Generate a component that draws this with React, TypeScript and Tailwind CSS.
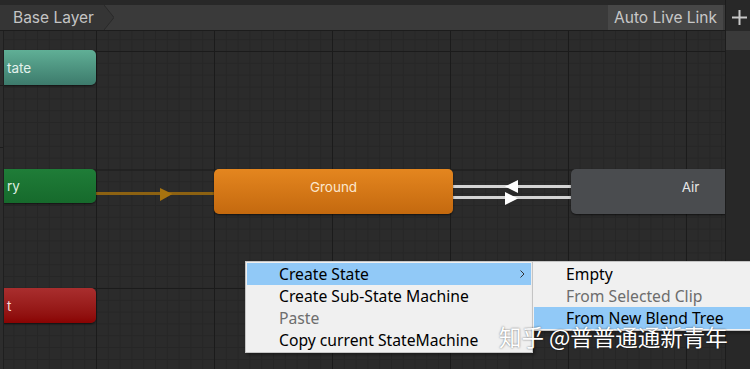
import React from "react";

const gridBg =
  "bg-[#2b2b2b] bg-[linear-gradient(to_right,#1b1b1b_1px,transparent_1px),linear-gradient(to_bottom,#1b1b1b_1px,transparent_1px),linear-gradient(to_right,#262626_1px,transparent_1px),linear-gradient(to_bottom,#262626_1px,transparent_1px)] bg-[size:118px_118.5px,118px_118.5px,11.8px_11.85px,11.8px_11.85px] bg-[position:92px_20px,92px_20px,92px_20px,92px_20px]";

function MenuItem({
  label,
  highlighted,
  disabled,
  arrow,
  pl,
}: {
  label: string;
  highlighted?: boolean;
  disabled?: boolean;
  arrow?: boolean;
  pl: string;
}) {
  return (
    <div
      className={`relative flex h-[22px] items-center pt-[2px] ${pl} ${
        highlighted ? "bg-[#91c9f7]" : ""
      } ${disabled ? "text-[#6d6d6d]" : "text-[#000]"}`}
    >
      <span>{label}</span>
      {arrow && (
        <svg
          className="absolute right-[6px] top-[7px]"
          width="5"
          height="8"
          viewBox="0 0 5 8"
        >
          <path d="M0.5 0.5 L4 4 L0.5 7.5" stroke="#333" strokeWidth="1" fill="none" />
        </svg>
      )}
    </div>
  );
}

export default function App() {
  return (
    <div className="relative flex h-[369px] w-[750px] overflow-hidden bg-[#282828] font-['Inter',sans-serif]">
      {/* left main column */}
      <div className="flex w-[725px] flex-col">
        {/* top toolbar */}
        <div className="h-[5px] bg-[#282828]" />
        <div className="flex h-[26px] items-stretch border-b border-[#1c1c1c] bg-[#3a3a3a]">
          <div className="flex items-center">
            <div className="flex h-full items-center bg-[#353535] pl-[13px] pr-[10px] text-[15.5px] text-[#c4c4c4]">
              Base Layer
            </div>
            <svg width="10" height="25" viewBox="0 0 10 25" className="block">
              <path d="M0 0 L10 12.5 L0 25 Z" fill="#353535" />
              <path d="M0 0 L10 12.5 L0 25" stroke="#2a2a2a" strokeWidth="1" fill="none" />
            </svg>
          </div>
          <div className="flex-1" />
          <div className="mr-[2px] flex items-center bg-[#474747] px-[6px] text-[15.5px] text-[#c8c8c8]">
            Auto Live Link
          </div>
        </div>
        {/* body */}
        <div className="flex flex-1">
          <div className="relative w-[4px] border-r border-[#1f1f1f] bg-[#2d2d2d]">
            <div className="absolute left-0 top-[54px] h-px w-full bg-[#1c1c1c]" />
            <div className="absolute left-0 top-[116px] h-px w-full bg-[#1c1c1c]" />
          </div>
          <div className={`relative flex-1 overflow-hidden ${gridBg}`}>
            {/* connectors */}
            <svg className="absolute left-0 top-0" width="721" height="338">
              <rect x="92" y="161" width="118" height="3" fill="#8d6212" />
              <path d="M156 157 L168.5 163 L156 170 Z" fill="#a7730f" />
              <rect x="449" y="154" width="120" height="3" fill="#d4d4d4" />
              <rect x="449" y="165" width="120" height="3" fill="#d4d4d4" />
              <path d="M514 149 L501 155.5 L514 162 Z" fill="#ffffff" />
              <path d="M501 161 L514 167.5 L501 174 Z" fill="#ffffff" />
            </svg>
            {/* any state (cut) */}
            <div className="absolute left-[-4px] top-[19px] flex h-[35px] w-[96px] items-center rounded-[5px] bg-gradient-to-b from-[#60af96] to-[#3d7b6c] pl-[7px] pt-px text-[13.5px] text-[#e4f1ec] shadow-[0_1px_2px_rgba(0,0,0,0.6)]">
              tate
            </div>
            {/* entry (cut) */}
            <div className="absolute left-[-4px] top-[138px] flex h-[34px] w-[96px] items-center rounded-[5px] bg-gradient-to-b from-[#1f7d38] to-[#166a2c] pl-[7px] pt-px text-[13.5px] text-[#dfeee1] shadow-[0_1px_2px_rgba(0,0,0,0.6)]">
              ry
            </div>
            {/* exit (cut) */}
            <div className="absolute left-[-4px] top-[257px] flex h-[35px] w-[96px] items-center rounded-[5px] bg-gradient-to-b from-[#a92e2e] to-[#8a0303] pl-[7px] pt-px text-[13.5px] text-[#f3dcdc] shadow-[0_1px_2px_rgba(0,0,0,0.6)]">
              t
            </div>
            {/* Ground */}
            <div className="absolute left-[210px] top-[138px] flex h-[45px] w-[239px] justify-center rounded-[5px] bg-gradient-to-b from-[#e4861f] to-[#c4690e] pt-[8px] text-[13.5px] text-[#fbe7cd] shadow-[0_1px_2px_rgba(0,0,0,0.6)]">
              Ground
            </div>
            {/* Air */}
            <div className="absolute left-[567px] top-[138px] flex h-[45px] w-[239px] justify-center rounded-[5px] bg-[#4a4c4f] pt-[8px] text-[13.5px] text-[#e6e6e6] shadow-[0_1px_2px_rgba(0,0,0,0.6)]">
              Air
            </div>
          </div>
        </div>
      </div>
      {/* right panel */}
      <div className="flex w-[25px] flex-col border-l border-[#1c1c1c] bg-[#282828]">
        <div className="flex h-[31px] items-center justify-center pl-[2px] pt-[3px]">
          <svg width="15" height="15" viewBox="0 0 15 15">
            <rect x="6.5" y="0" width="2" height="15" fill="#c8c8c8" />
            <rect x="0" y="6.5" width="15" height="2" fill="#c8c8c8" />
          </svg>
        </div>
        <div className="h-[19px] bg-[#3a3a3a]" />
        <div className="flex-1" />
      </div>

      {/* context menu */}
      <div className="absolute left-[245px] top-[261px] w-[288px] border border-[#c4c4c4] bg-[#f0f0f0] p-px font-['Noto_Sans','Liberation_Sans',sans-serif] text-[15.7px] leading-none shadow-[2px_2px_3px_rgba(0,0,0,0.35)]">
        <MenuItem label="Create State" highlighted arrow pl="pl-[32px]" />
        <MenuItem label="Create Sub-State Machine" pl="pl-[32px]" />
        <MenuItem label="Paste" disabled pl="pl-[32px]" />
        <MenuItem label="Copy current StateMachine" pl="pl-[32px]" />
      </div>
      {/* submenu */}
      <div className="absolute left-[532px] top-[261px] w-[230px] border border-[#c4c4c4] bg-[#f0f0f0] p-px font-['Noto_Sans','Liberation_Sans',sans-serif] text-[15.7px] leading-none shadow-[2px_2px_3px_rgba(0,0,0,0.35)]">
        <MenuItem label="Empty" pl="pl-[32px]" />
        <MenuItem label="From Selected Clip" disabled pl="pl-[32px]" />
        <MenuItem label="From New Blend Tree" highlighted pl="pl-[32px]" />
      </div>

      {/* watermark */}
      <div className="pointer-events-none absolute left-[499px] top-[325px] whitespace-nowrap font-['Noto_Sans_CJK_SC',sans-serif] text-[22.5px] leading-none text-white [text-shadow:0_0_2px_rgba(0,0,0,0.6)]">
        知乎 @普普通通新青年
      </div>
    </div>
  );
}
